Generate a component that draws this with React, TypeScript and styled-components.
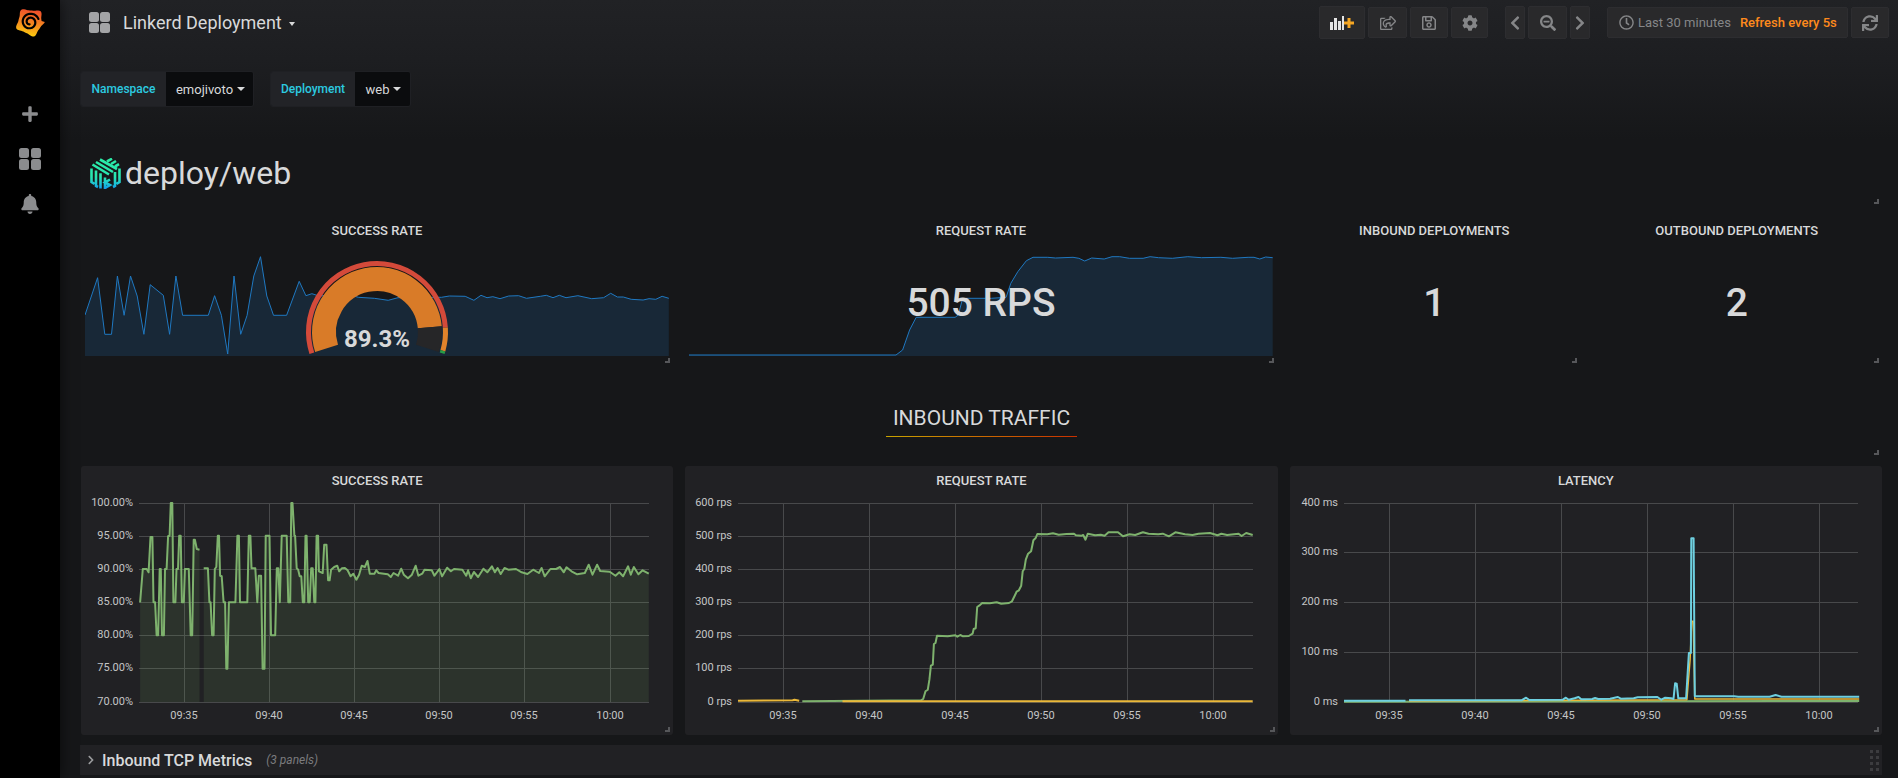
import React from 'react';
import styled, { createGlobalStyle } from 'styled-components';
import {
  FaBell, FaChevronLeft, FaChevronRight, FaCog, FaPlus, FaRegClock,
  FaRegSave, FaRegShareSquare, FaSearchMinus, FaSync
} from 'react-icons/fa';

type Point = [number, number];

const colors = {
  page: '#161719',
  panel: '#212124',
  button: '#29292b',
  text: '#d8d9da',
  tick: '#c4c5c6',
  grid: '#48494b',
  green: '#7eb26d',
  yellow: '#eab839',
  cyan: '#6ed0e0',
  blue: '#1f78c1'
};

const GlobalStyle = createGlobalStyle`
  html, body { margin: 0; padding: 0; background: ${colors.page}; }
  body { font-family: Roboto, "Liberation Sans", sans-serif; color: ${colors.text}; overflow: hidden; }
`;

const Page = styled.div`
  display: flex;
  width: 1898px;
  height: 778px;
  overflow: hidden;
  background: linear-gradient(180deg, #212225 0, #1d1e21 60px, ${colors.page} 140px);
`;

const Sidebar = styled.nav`
  flex: 0 0 60px;
  display: flex;
  flex-direction: column;
  align-items: center;
  background: #000;
  box-shadow: 0 0 14px rgba(0, 0, 0, 0.6);
  z-index: 2;
`;

const LogoSlot = styled.div`
  height: 91px;
  padding-top: 6px;
  box-sizing: border-box;
`;

const SideItem = styled.div`
  height: 45px;
  display: flex;
  align-items: center;
  justify-content: center;
  color: #8b8c8e;
  font-size: 18px;
`;

const Tiles = styled.div<{ $size: number; $color: string }>`
  display: grid;
  grid-template-columns: 1fr 1fr;
  gap: 1.5px;
  width: ${p => p.$size}px;
  height: ${p => p.$size}px;
  & > i {
    display: block;
    background: ${p => p.$color};
    border-radius: 2.5px;
  }
`;

const Main = styled.main`
  flex: 1;
  min-width: 0;
`;

const Navbar = styled.header`
  height: 58px;
  display: flex;
  align-items: flex-start;
  padding: 6px 9px 0 29px;
  box-sizing: border-box;
`;

const DashTitle = styled.div`
  display: flex;
  align-items: center;
  height: 33px;
  font-size: 18px;
  color: ${colors.text};
  & > span { margin-left: 13px; }
`;

const Caret = styled.b`
  display: inline-block;
  margin-left: 7px;
  margin-top: 3px;
  border-left: 3.5px solid transparent;
  border-right: 3.5px solid transparent;
  border-top: 4px solid ${colors.text};
`;

const Toolbar = styled.div`
  margin-left: auto;
  display: flex;
  align-items: flex-start;
`;

const ToolGroup = styled.div`
  display: flex;
  align-items: flex-start;
  gap: 3px;
  margin-left: 17px;
`;

const NavButton = styled.div<{ $w: number; $tall?: boolean }>`
  width: ${p => p.$w}px;
  height: ${p => (p.$tall ? 33 : 31)}px;
  margin-top: ${p => (p.$tall ? 0 : 1)}px;
  box-sizing: border-box;
  display: flex;
  align-items: center;
  justify-content: center;
  background: ${colors.button};
  border: 1px solid #2d2d30;
  border-radius: 2px;
  color: #858688;
  font-size: 16px;
`;

const TimeButton = styled(NavButton)`
  justify-content: flex-start;
  padding-left: 11px;
  font-size: 13px;
  & > svg { margin-right: 4px; font-size: 15px; }
`;

const Refresh = styled.span`
  margin-left: 9px;
  color: #ff8a1c;
  font-weight: 500;
`;

const VarRow = styled.div`
  display: flex;
  gap: 16px;
  padding: 13px 0 0 20px;
`;

const VarGroup = styled.div`
  display: flex;
  height: 36px;
  box-sizing: border-box;
  border: 1px solid #1f2024;
  border-radius: 3px;
  overflow: hidden;
  font-size: 12px;
`;

const VarLabel = styled.div<{ $w: number }>`
  width: ${p => p.$w}px;
  display: flex;
  align-items: center;
  justify-content: center;
  background: #222327;
  color: #2ccbe0;
  font-weight: 500;
`;

const VarValue = styled.div<{ $w: number }>`
  width: ${p => p.$w}px;
  box-sizing: border-box;
  padding-left: 2px;
  display: flex;
  align-items: center;
  justify-content: center;
  background: #0b0c0e;
  font-size: 13px;
  & > b {
    margin-left: 4px;
    margin-top: 0;
    border-left-width: 4px;
    border-right-width: 4px;
  }
`;

const Dashboard = styled.div`
  padding: 0 16px 0 21px;
`;

const Panel = styled.section`
  position: relative;
`;

const Handle = styled.i`
  position: absolute;
  right: 3px;
  bottom: 3px;
  width: 3px;
  height: 3px;
  border-right: 2px solid #56575a;
  border-bottom: 2px solid #56575a;
`;

const TextPanel = styled(Panel)`
  height: 82px;
  margin-top: 18px;
  display: flex;
  align-items: flex-start;
  padding: 33px 0 0 9px;
  box-sizing: border-box;
`;

const Headline = styled.h1`
  margin: 0 0 0 4px;
  font-size: 32px;
  line-height: 30px;
  font-weight: 400;
  color: ${colors.text};
`;

const StatRow = styled.div`
  display: grid;
  grid-template-columns: 592px 592px 1fr 1fr;
  gap: 12px;
  height: 152px;
  margin-top: 7px;
`;

const StatPanel = styled(Panel)`
  display: flex;
  flex-direction: column;
`;

const PanelTitle = styled.h2<{ $h: number }>`
  margin: 0;
  height: ${p => p.$h}px;
  line-height: ${p => p.$h + 3}px;
  text-align: center;
  font-size: 13px;
  font-weight: 500;
  color: ${colors.text};
  text-transform: uppercase;
`;

const StatBody = styled.div`
  position: relative;
  flex: 1;
  margin: 0 4px 10px;
`;

const Spark = styled.svg`
  display: block;
  width: 100%;
  height: 100%;
`;

const StatValue = styled.div`
  position: absolute;
  inset: 0;
  display: flex;
  align-items: center;
  justify-content: center;
  padding-top: 6px;
  box-sizing: border-box;
  font-size: 39px;
  font-weight: 500;
  color: ${colors.text};
`;

const GaugeBox = styled.svg`
  position: absolute;
  left: 217px;
  top: 13px;
  width: 150px;
  height: 100px;
  text {
    fill: ${colors.text};
    font-size: 24px;
    font-weight: 700;
    text-anchor: middle;
  }
`;

const HeadingPanel = styled(Panel)`
  height: 78px;
  margin-top: 14px;
  display: flex;
  flex-direction: column;
  align-items: center;
  padding-top: 27px;
  box-sizing: border-box;
`;

const Heading = styled.div`
  width: 191px;
  padding-bottom: 7px;
  text-align: center;
  font-size: 21px;
  line-height: 22px;
  color: ${colors.text};
  border-bottom: 1px solid;
  border-image: linear-gradient(90deg, #c9a400, #c92f00) 1;
`;

const ChartRow = styled.div`
  display: grid;
  grid-template-columns: repeat(3, 1fr);
  gap: 12px;
  margin-top: 8px;
`;

const ChartPanel = styled(Panel)`
  height: 269px;
  background: ${colors.panel};
  border-radius: 3px;
`;

const ChartSvg = styled.svg`
  display: block;
  width: 592px;
  height: 243px;
  text {
    fill: ${colors.tick};
    font-size: 11px;
    dominant-baseline: central;
  }
`;

const RowBar = styled.div`
  display: flex;
  align-items: center;
  height: 30px;
  margin: 10px 0 0 -1px;
  padding: 0 3px 0 6px;
  background: ${colors.panel};
  color: ${colors.text};
  font-size: 16px;
  font-weight: 500;
  & > svg { color: #9a9b9d; font-size: 10px; margin-right: 6px; }
`;

const RowHint = styled.em`
  margin-left: 14px;
  font-size: 12px;
  font-weight: 400;
  color: #7b7b7e;
`;

const Grip = styled.div`
  margin-left: auto;
  display: grid;
  grid-template-columns: repeat(2, 3px);
  grid-auto-rows: 3px;
  gap: 3px;
  & > i { background: #3c3c3f; }
`;

// traces were read off the reference, in its own zoomed pixels
const fromTrace = (pts: Point[], sx: number, x0: number, y0: number): Point[] =>
  pts.map(([x, y]) => [(x - x0) / sx, (y - y0) / 3]);

const line = (pts: Point[]) => pts.map(([x, y]) => `${x.toFixed(1)},${y.toFixed(1)}`).join(' ');

const area = (pts: Point[], bottom: number) =>
  `${pts[0][0].toFixed(1)},${bottom} ${line(pts)} ${pts[pts.length - 1][0].toFixed(1)},${bottom}`;

const successSpark = fromTrace([
  [38,315],[70,203],[88,373],[105,373],[120,198],[137,316],[153,198],[170,258],[187,373],[203,224],[236,256],
  [252,373],[268,198],[285,316],[350,316],[366,257],[383,316],[399,432],[415,198],[432,373],[448,316],[465,198],
  [482,140],[498,258],[515,316],[548,316],[580,214],[597,257],[612,251],[630,258],[700,252],[730,262],[770,265],
  [805,271],[830,263],[920,262],[940,262],[960,258],[1000,259],[1022,271],[1040,256],[1055,263],[1070,260],
  [1088,266],[1110,258],[1135,257],[1155,265],[1190,259],[1205,256],[1222,263],[1238,256],[1255,263],[1285,257],
  [1320,266],[1350,263],[1368,250],[1385,261],[1400,261],[1420,268],[1450,270],[1465,266],[1482,268],[1498,259],[1515,265]
], 2.53, 38, 102);

const requestSpark = fromTrace([
  [23,345],[555,345],[572,330],[590,270],[607,232],[707,232],[715,225],[725,180],[735,175],[800,175],[838,172],
  [850,130],[868,95],[890,62],[907,52],[945,52],[965,54],[1010,52],[1025,55],[1040,63],[1058,54],[1090,57],
  [1110,50],[1130,50],[1155,55],[1190,55],[1208,50],[1230,53],[1265,55],[1305,50],[1340,53],[1390,52],[1420,55],
  [1460,52],[1475,52],[1490,57],[1505,51],[1523,53]
], 2.57, 23, 12);

const successA: Point[] = [
  [183,428],[190,328],[200,328],[205,338],[210,232],[215,232],[218,428],[222,428],[226,527],[230,527],[234,328],
  [237,328],[240,527],[245,527],[248,328],[252,328],[256,230],[260,228],[263,130],[267,130],[270,428],[275,428],
  [278,328],[282,328],[285,228],[289,228],[292,428],[297,428],[300,328],[310,328],[315,527],[319,527],[323,240],
  [326,240],[331,268],[338,270]
];

const successB: Point[] = [
  [349,326],[360,326],[364,428],[367,428],[371,527],[375,527],[378,328],[382,322],[386,228],[389,228],[392,348],
  [396,350],[401,428],[405,428],[408,627],[411,627],[415,428],[432,428],[437,228],[441,228],[444,428],[463,428],
  [467,228],[471,228],[474,326],[484,326],[489,428],[493,348],[499,348],[503,627],[508,627],[511,228],[521,228],
  [525,527],[536,527],[540,326],[544,326],[548,428],[553,228],[566,228],[570,428],[575,428],[578,130],[581,130],
  [586,228],[588,228],[592,326],[596,330],[600,350],[604,350],[608,428],[612,428],[615,228],[618,228],[622,428],
  [626,428],[630,326],[634,326],[638,428],[641,428],[644,228],[648,228],[650,335],[660,340],[664,255],[670,255],
  [674,362],[678,362],[682,330],[690,322],[698,318],[703,335],[710,326],[718,325],[725,332],[733,350],[740,342],
  [748,360],[755,345],[762,318],[770,322],[777,304],[783,342],[795,342],[800,332],[806,340],[820,342],[830,344],
  [838,352],[845,340],[857,348],[865,327],[872,345],[883,356],[893,345],[903,318],[910,348],[920,342],[926,330],
  [945,332],[952,348],[965,328],[972,350],[985,324],[995,335],[1003,328],[1025,330],[1035,348],[1040,332],[1047,356],
  [1055,337],[1066,352],[1080,327],[1090,338],[1102,320],[1110,338],[1117,325],[1125,343],[1135,325],[1145,330],
  [1165,328],[1180,338],[1195,343],[1210,330],[1225,340],[1232,325],[1240,350],[1255,328],[1270,328],[1280,322],
  [1290,338],[1297,323],[1310,335],[1325,344],[1345,340],[1355,315],[1365,345],[1377,315],[1385,334],[1410,336],
  [1425,348],[1435,338],[1445,350],[1458,320],[1465,345],[1473,322],[1485,344],[1496,332],[1512,342]
];

const requestGreen: Point[] = [
  [320,725],[630,722],[636,718],[642,695],[648,690],[652,660],[656,618],[661,615],[664,553],[668,550],[672,528],
  [700,530],[720,527],[725,531],[733,526],[740,530],[755,529],[765,522],[768,508],[773,506],[777,442],[782,438],
  [790,430],[810,431],[828,428],[840,432],[860,430],[868,425],[875,408],[880,396],[886,392],[892,378],[896,335],
  [900,328],[904,300],[910,282],[918,275],[924,242],[930,235],[934,223],[960,224],[975,221],[990,225],[1010,223],
  [1030,222],[1035,227],[1050,228],[1054,226],[1060,240],[1066,222],[1085,227],[1100,225],[1110,228],[1120,218],
  [1145,218],[1158,230],[1175,224],[1190,226],[1210,218],[1225,222],[1250,224],[1262,222],[1278,230],[1295,218],
  [1320,224],[1340,226],[1355,222],[1385,220],[1405,227],[1415,222],[1430,226],[1460,222],[1468,229],[1480,220],[1497,226]
];

const latencyCyan: Point[] = [
  [325,722],[610,722],[622,714],[630,721],[715,720],[723,714],[730,720],[745,716],[755,712],[762,719],[790,718],
  [797,715],[805,718],[835,717],[855,712],[862,717],[895,716],[905,713],[955,712],[965,720],[975,714],[990,716],
  [996,718],[1000,671],[1004,672],[1008,716],[1028,716],[1035,580],[1040,580],[1041,236],[1047,236],[1050,710],
  [1150,710],[1160,711],[1240,711],[1255,706],[1270,711],[1467,711]
];

const latencyYellow: Point[] = [
  [325,724],[1030,720],[1038,600],[1042,485],[1046,485],[1050,718],[1467,718]
];

type Series = { color: string; width: number; points: Point[]; fill?: boolean };

type ChartProps = {
  title: string;
  plotLeft: number;
  yLabels: string[];
  yAt: number[];
  ticks: number[];
  series: Series[];
};

const PLOT_TOP = 11;
const PLOT_BOTTOM = 210;
const PLOT_RIGHT = 568;
const TIMES = ['09:35', '09:40', '09:45', '09:50', '09:55', '10:00'];

const Chart: React.FC<ChartProps> = ({ title, plotLeft, yLabels, yAt, ticks, series }) => (
  <ChartPanel>
    <PanelTitle $h={26}>{title}</PanelTitle>
    <ChartSvg viewBox="0 0 592 243">
      {yAt.map((y, i) => (
        <g key={y}>
          <line x1={plotLeft} x2={PLOT_RIGHT} y1={PLOT_TOP + y + 0.5} y2={PLOT_TOP + y + 0.5} stroke={colors.grid} />
          <text x={plotLeft - 6} y={PLOT_TOP + y - 1} textAnchor="end">{yLabels[i]}</text>
        </g>
      ))}
      {ticks.map((x, i) => (
        <g key={x}>
          <line x1={x + 0.5} x2={x + 0.5} y1={PLOT_TOP} y2={PLOT_BOTTOM} stroke={colors.grid} />
          <text x={x} y={223} textAnchor="middle">{TIMES[i]}</text>
        </g>
      ))}
      <g transform={`translate(${plotLeft} ${PLOT_TOP})`}>
        {series.map((s, i) => (
          <g key={i}>
            {s.fill && <polygon points={area(s.points, 199)} fill={s.color} fillOpacity={0.12} />}
            <polyline points={line(s.points)} fill="none" stroke={s.color} strokeWidth={s.width} strokeLinejoin="round" />
          </g>
        ))}
      </g>
    </ChartSvg>
    <Handle />
  </ChartPanel>
);

const gaugePoint = (f: number, r: number): Point => {
  const a = ((162 + 216 * f) * Math.PI) / 180;
  return [75 + r * Math.cos(a), 75 + r * Math.sin(a)];
};

const GaugeArc: React.FC<{ from: number; to: number; r: number; width: number; color: string }> = ({ from, to, r, width, color }) => {
  const [x1, y1] = gaugePoint(from, r);
  const [x2, y2] = gaugePoint(to, r);
  const large = (to - from) * 216 > 180 ? 1 : 0;
  return (
    <path
      d={`M${x1.toFixed(2)} ${y1.toFixed(2)}A${r} ${r} 0 ${large} 1 ${x2.toFixed(2)} ${y2.toFixed(2)}`}
      fill="none"
      stroke={color}
      strokeWidth={width}
    />
  );
};

const Gauge = () => (
  <GaugeBox viewBox="0 0 150 100">
    <GaugeArc from={0} to={0.893} r={53} width={24} color="#d97b28" />
    <GaugeArc from={0.893} to={1} r={53} width={24} color="#262628" />
    <GaugeArc from={0} to={0.9} r={68.5} width={5} color="#d44a3a" />
    <GaugeArc from={0.9} to={0.99} r={68.5} width={5} color="#e0832b" />
    <GaugeArc from={0.99} to={1} r={68.5} width={5} color="#299c46" />
    <text x={75} y={90}>89.3%</text>
  </GaugeBox>
);

const gearPath = () => {
  const pts: string[] = [];
  for (let i = 0; i < 72; i++) {
    const a = (i / 72) * Math.PI * 2;
    const r = 11.6 + 3.5 * Math.pow(Math.cos(a * 4.5 + 0.4) * 0.5 + 0.5, 2);
    pts.push(`${(15 + r * Math.cos(a)).toFixed(2)},${(16 + r * Math.sin(a)).toFixed(2)}`);
  }
  return pts.join(' ');
};

const spiralPath = () => {
  const pts: string[] = [];
  for (let i = 0; i <= 60; i++) {
    const t = i / 60;
    const a = (-20 - 600 * t) * (Math.PI / 180);
    const r = 9 - 6.6 * t;
    pts.push(`${(15 + r * Math.cos(a)).toFixed(2)},${(16 + r * Math.sin(a)).toFixed(2)}`);
  }
  return pts.join(' ');
};

const GrafanaLogo = () => (
  <svg width="30" height="32" viewBox="0 0 30 32">
    <defs>
      <linearGradient id="grafana" x1="0.6" y1="0" x2="0.4" y2="1">
        <stop offset="0" stopColor="#ee4a2c" />
        <stop offset="0.55" stopColor="#f58a1f" />
        <stop offset="1" stopColor="#fcd00c" />
      </linearGradient>
    </defs>
    <polygon points={gearPath()} fill="url(#grafana)" />
    <polyline points={spiralPath()} fill="none" stroke="#000" strokeWidth="2.2" strokeLinecap="round" />
  </svg>
);

const LinkerdLogo = () => (
  <svg width="31" height="32" viewBox="0 0 31 32">
    <defs>
      <linearGradient id="linkerd" gradientUnits="userSpaceOnUse" x1="0" y1="0" x2="0" y2="32">
        <stop offset="0" stopColor="#2beda7" />
        <stop offset="0.6" stopColor="#29e4b0" />
        <stop offset="0.82" stopColor="#1cc0d8" />
        <stop offset="1" stopColor="#0f8ff0" />
      </linearGradient>
    </defs>
    <g fill="none" stroke="url(#linkerd)" strokeWidth="2.6">
      <path d="M10 1.500l17 9.500M6 4l17 10M2.500 6.500l16.500 10" />
      <path d="M17 3.500l5-2.800M21 6l5-3M25 8.500l4-2.300" />
      <path d="M1.500 10.500v13.500l3 1.800M6 12.500v15.500l2 1M10.500 15.200v15.300" />
      <path d="M29.500 10.500v13.500l-3 1.800M25 14v14l-2 1" />
      <path d="M15 19.500v11.500M20 21.500l-5 3 5 2.500-5 3" />
    </g>
  </svg>
);

const AddPanelIcon = () => (
  <svg width="24" height="14" viewBox="0 0 24 14">
    <path d="M0 6h3v8H0zM4 2h3v12H4zM8 5h3v9H8zM12 0h2v14h-2z" fill="#e4e4e4" />
    <path d="M17.500 2h3v3.500H24v3h-3.500V12h-3V8.500H14v-3h3.500z" fill="#f5a623" />
  </svg>
);

const DashIcon: React.FC<{ size: number; color: string }> = ({ size, color }) => (
  <Tiles $size={size} $color={color}><i /><i /><i /><i /></Tiles>
);

const App: React.FC = () => (
  <>
    <GlobalStyle />
    <Page>
      <Sidebar>
        <LogoSlot><GrafanaLogo /></LogoSlot>
        <SideItem><FaPlus /></SideItem>
        <SideItem><DashIcon size={22} color="#8b8c8e" /></SideItem>
        <SideItem><FaBell size={20} /></SideItem>
      </Sidebar>
      <Main>
        <Navbar>
          <DashTitle>
            <DashIcon size={21} color="#a3a4a6" />
            <span>Linkerd Deployment</span>
            <Caret />
          </DashTitle>
          <Toolbar>
            <ToolGroup>
              <NavButton $w={46} $tall><AddPanelIcon /></NavButton>
              <NavButton $w={39}><FaRegShareSquare /></NavButton>
              <NavButton $w={38}><FaRegSave /></NavButton>
              <NavButton $w={37}><FaCog /></NavButton>
            </ToolGroup>
            <ToolGroup>
              <NavButton $w={20} $tall><FaChevronLeft /></NavButton>
              <NavButton $w={39} $tall><FaSearchMinus /></NavButton>
              <NavButton $w={20} $tall><FaChevronRight /></NavButton>
            </ToolGroup>
            <ToolGroup>
              <TimeButton $w={241}>
                <FaRegClock />
                Last 30 minutes
                <Refresh>Refresh every 5s</Refresh>
              </TimeButton>
              <NavButton $w={38}><FaSync /></NavButton>
            </ToolGroup>
          </Toolbar>
        </Navbar>
        <VarRow>
          <VarGroup>
            <VarLabel $w={85}>Namespace</VarLabel>
            <VarValue $w={87}>emojivoto<Caret /></VarValue>
          </VarGroup>
          <VarGroup>
            <VarLabel $w={84}>Deployment</VarLabel>
            <VarValue $w={55}>web<Caret /></VarValue>
          </VarGroup>
        </VarRow>
        <Dashboard>
          <TextPanel>
            <LinkerdLogo />
            <Headline>deploy/web</Headline>
            <Handle />
          </TextPanel>
          <StatRow>
            <StatPanel>
              <PanelTitle $h={30}>Success Rate</PanelTitle>
              <StatBody>
                <Spark viewBox="0 0 584 112">
                  <polygon points={area(successSpark, 112)} fill={colors.blue} fillOpacity={0.18} />
                  <polyline points={line(successSpark)} fill="none" stroke={colors.blue} strokeWidth={1} />
                </Spark>
                <Gauge />
              </StatBody>
              <Handle />
            </StatPanel>
            <StatPanel>
              <PanelTitle $h={30}>Request Rate</PanelTitle>
              <StatBody>
                <Spark viewBox="0 0 584 112">
                  <polygon points={area(requestSpark, 112)} fill={colors.blue} fillOpacity={0.18} />
                  <polyline points={line(requestSpark)} fill="none" stroke={colors.blue} strokeWidth={1} />
                </Spark>
                <StatValue>505 RPS</StatValue>
              </StatBody>
              <Handle />
            </StatPanel>
            <StatPanel>
              <PanelTitle $h={30}>Inbound Deployments</PanelTitle>
              <StatBody><StatValue>1</StatValue></StatBody>
              <Handle />
            </StatPanel>
            <StatPanel>
              <PanelTitle $h={30}>Outbound Deployments</PanelTitle>
              <StatBody><StatValue>2</StatValue></StatBody>
              <Handle />
            </StatPanel>
          </StatRow>
          <HeadingPanel>
            <Heading>INBOUND TRAFFIC</Heading>
            <Handle />
          </HeadingPanel>
          <ChartRow>
            <Chart
              title="Success Rate"
              plotLeft={58}
              yLabels={['100.00%', '95.00%', '90.00%', '85.00%', '80.00%', '75.00%', '70.00%']}
              yAt={[0, 33, 66, 99, 132, 165, 199]}
              ticks={[103, 188, 273, 358, 443, 529]}
              series={[
                { color: colors.green, width: 2, fill: true, points: fromTrace(successA, 2.613, 180, 130) },
                { color: colors.green, width: 2, fill: true, points: fromTrace(successB, 2.613, 180, 130) }
              ]}
            />
            <Chart
              title="Request Rate"
              plotLeft={53}
              yLabels={['600 rps', '500 rps', '400 rps', '300 rps', '200 rps', '100 rps', '0 rps']}
              yAt={[0, 33, 66, 99, 132, 165, 199]}
              ticks={[98, 184, 270, 356, 442, 528]}
              series={[
                { color: colors.green, width: 2, points: fromTrace(requestGreen, 2.613, 152, 130) },
                { color: colors.yellow, width: 2, points: fromTrace([[152,723],[295,722],[300,720],[312,723]], 2.613, 152, 130) },
                { color: colors.yellow, width: 2, points: fromTrace([[425,725],[1497,725]], 2.613, 152, 130) }
              ]}
            />
            <Chart
              title="Latency"
              plotLeft={54}
              yLabels={['400 ms', '300 ms', '200 ms', '100 ms', '0 ms']}
              yAt={[0, 49, 99, 149, 199]}
              ticks={[99, 185, 271, 357, 443, 529]}
              series={[
                { color: colors.green, width: 2, points: fromTrace([[160,726],[1467,724]], 2.537, 160, 130) },
                { color: colors.yellow, width: 1.5, points: fromTrace(latencyYellow, 2.537, 160, 130) },
                { color: colors.cyan, width: 2, points: fromTrace([[160,723],[316,723]], 2.537, 160, 130) },
                { color: colors.cyan, width: 2, points: fromTrace(latencyCyan, 2.537, 160, 130) }
              ]}
            />
          </ChartRow>
          <RowBar>
            <FaChevronRight />
            Inbound TCP Metrics
            <RowHint>(3 panels)</RowHint>
            <Grip>
              {Array.from({ length: 8 }, (_, i) => <i key={i} />)}
            </Grip>
          </RowBar>
        </Dashboard>
      </Main>
    </Page>
  </>
);

export default App;
